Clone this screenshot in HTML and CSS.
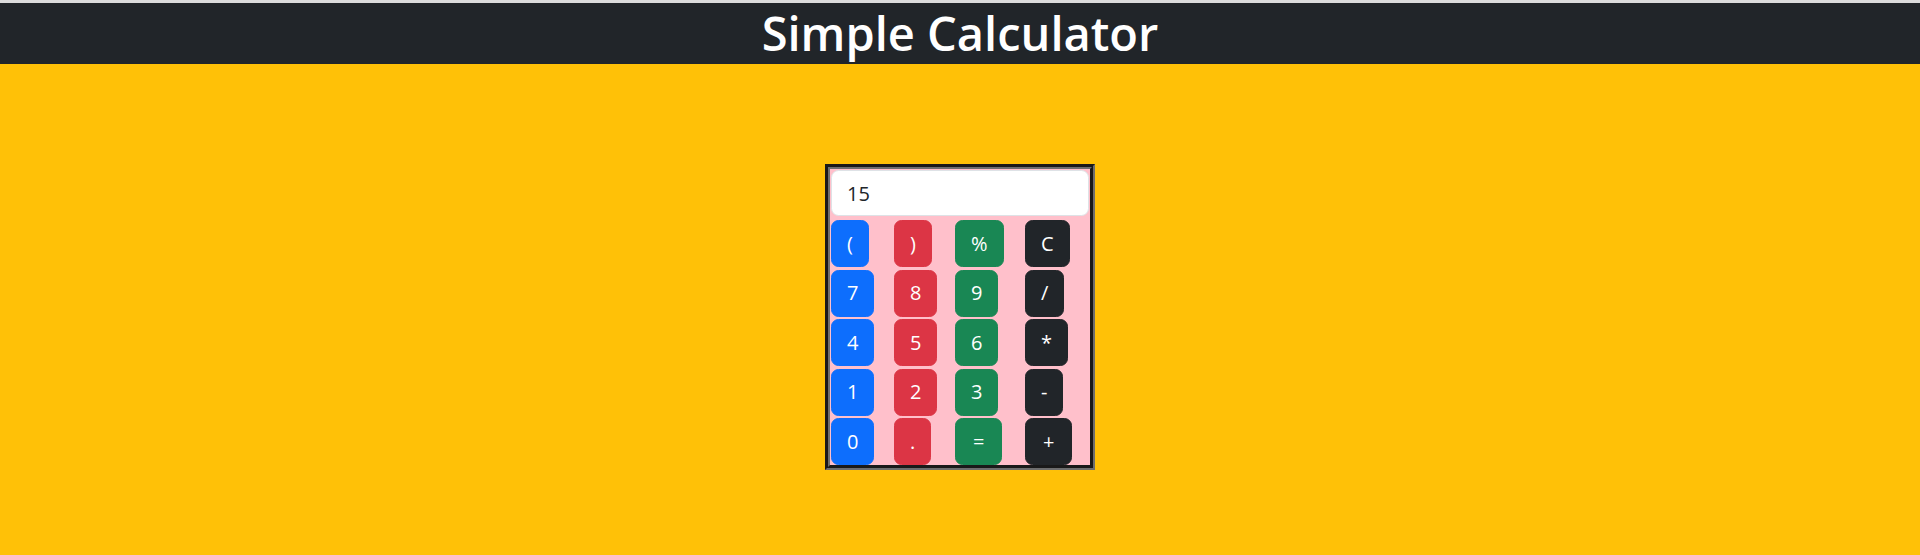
FILE: index.html
```html
<!DOCTYPE html>
<html lang="en">
<head>
<meta charset="utf-8">
<title>Simple Calculator</title>
<link rel="stylesheet" href="styles.css">
</head>
<body>
<div class="topline"></div>
<header class="header">
  <h1 class="title">Simple Calculator</h1>
</header>
<main class="main">
  <div class="calc">
    <input class="display" type="text" value="15" readonly>
    <div class="keys">
      <button class="btn blue">(</button>
      <button class="btn red">)</button>
      <button class="btn green">%</button>
      <button class="btn dark">C</button>
      <button class="btn blue">7</button>
      <button class="btn red">8</button>
      <button class="btn green">9</button>
      <button class="btn dark">/</button>
      <button class="btn blue">4</button>
      <button class="btn red">5</button>
      <button class="btn green">6</button>
      <button class="btn dark">*</button>
      <button class="btn blue">1</button>
      <button class="btn red">2</button>
      <button class="btn green">3</button>
      <button class="btn dark">-</button>
      <button class="btn blue">0</button>
      <button class="btn red">.</button>
      <button class="btn green wide">=</button>
      <button class="btn dark wide">+</button>
    </div>
  </div>
</main>
</body>
</html>
```
FILE: styles.css
```css
html, body {
  margin: 0;
  padding: 0;
}
body {
  background: #ffc107;
  font-family: "Open Sans", "Noto Sans", sans-serif;
  height: 555px;
  overflow: hidden;
}
.topline {
  height: 3px;
  background: #dcdcdc;
}
.header {
  background: #212529;
  height: 61px;
}
.title {
  margin: 0;
  color: #fff;
  text-align: center;
  font-size: 47px;
  font-weight: 600;
  line-height: 61px;
}
.main {
  display: flex;
  justify-content: center;
  padding-top: 100px;
}
.calc {
  width: 270px;
  box-sizing: border-box;
  border: 5px groove #6e6e6e;
  background: #ffc0cb;
  padding: 1px 1px 0 1px;
}
.display {
  display: block;
  box-sizing: border-box;
  width: 258px;
  height: 46px;
  margin: 0 0 4px 0;
  padding: 1px 15px 0;
  border: 1px solid #dee2e6;
  border-radius: 7.5px;
  background: #fff;
  color: #212529;
  font-family: "Open Sans", "Noto Sans", sans-serif;
  font-size: 20px;
  outline: none;
}
.keys {
  display: grid;
  grid-template-columns: 60.5px 58.5px 67.5px 1fr;
  grid-auto-rows: 47px;
  column-gap: 2.5px;
  row-gap: 2.5px;
}
.btn {
  justify-self: start;
  height: 47px;
  padding: 0 15px;
  border: 1px solid transparent;
  border-radius: 7.5px;
  color: #fff;
  font-family: "Open Sans", "Noto Sans", sans-serif;
  font-size: 20px;
  line-height: 1;
  cursor: pointer;
}
.wide {
  padding: 0 17px;
}
.blue { background: #0d6efd; border-color: #0d6efd; }
.red { background: #dc3545; border-color: #dc3545; }
.green { background: #198754; border-color: #198754; }
.dark { background: #212529; border-color: #212529; }
```
